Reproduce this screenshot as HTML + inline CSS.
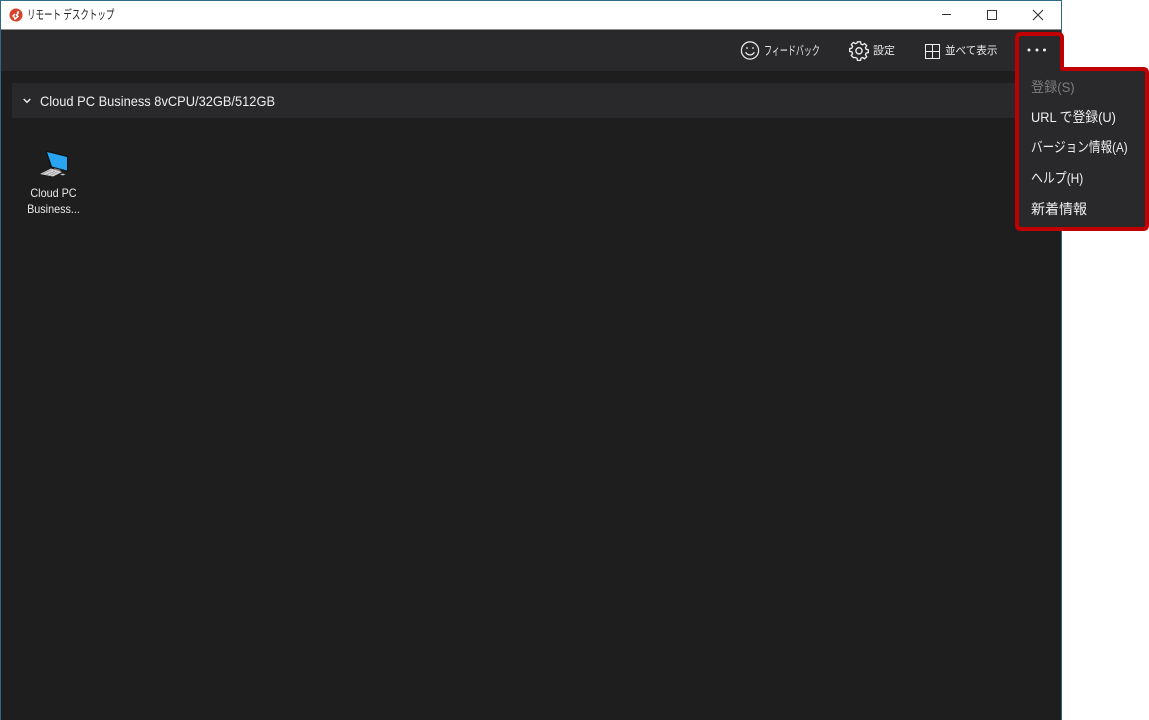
<!DOCTYPE html>
<html lang="ja"><head><meta charset="utf-8"><title>リモート デスクトップ</title>
<style>
html,body{margin:0;padding:0;background:#fff;}
body{width:1149px;height:720px;overflow:hidden;position:relative;font-family:"Liberation Sans","Noto Sans CJK JP",sans-serif;}
.a{position:absolute;white-space:nowrap;}
.m{position:absolute;left:1031px;font-size:14px;line-height:20px;color:#f0f0f0;white-space:nowrap;transform-origin:0 50%;}
.t{position:absolute;font-size:11px;line-height:16px;color:#e8e8e8;white-space:nowrap;top:43px;transform-origin:0 50%;}
</style></head><body>
<div class="a" style="left:0;top:0;width:1062px;height:720px;background:#1e1e1e;"></div>
<div class="a" style="left:0;top:0;width:1062px;height:29px;background:#fff;"></div>
<div class="a" style="left:0;top:29px;width:1062px;height:1px;background:#8c8c8c;"></div>
<div class="a" style="left:0;top:30px;width:1062px;height:41px;background:#29282b;"></div>
<div class="a" style="left:12px;top:83px;width:1050px;height:35px;background:#29282b;"></div>
<div class="a" style="left:0;top:0;width:1062px;height:1px;background:#2f6f8c;"></div>
<div class="a" style="left:0;top:0;width:1px;height:720px;background:#2a6a86;"></div>
<div class="a" style="left:1061px;top:0;width:1px;height:720px;background:#2a6a86;"></div>

<svg class="a" style="left:9px;top:8px" width="14" height="14" viewBox="0 0 14 14"><circle cx="7" cy="7" r="6.5" fill="#d8412a"/><path d="M3.5 8.500L6 6M8 4.500l2 -1M9.500 4.500L7.500 7l1.500 1.500L6 11 5 8.500" fill="none" stroke="#fff" stroke-width="1.5"/></svg>
<div class="a" style="left:27px;top:8px;font-size:12.5px;line-height:15px;color:#222;transform:scaleX(.68);transform-origin:0 50%;">リモート デスクトップ</div>

<svg class="a" style="left:930px;top:0" width="125" height="29" viewBox="0 0 125 29" fill="none" stroke="#333" stroke-width="1">
<path d="M12 14.500h9"/><rect x="57.500" y="10.500" width="9" height="9"/><path d="M103 10l10 10M113 10l-10 10" stroke-width="1.1"/></svg>

<svg class="a" style="left:740px;top:40px" width="21" height="21" viewBox="0 0 21 21" fill="none" stroke="#eee" stroke-width="1.2"><circle cx="10" cy="10.500" r="8.600"/><circle cx="7" cy="8" r=".9" fill="#eee" stroke="none"/><circle cx="13" cy="8" r=".9" fill="#eee" stroke="none"/><path d="M5.700 12.200c1.800 3.600 6.800 3.600 8.600 0"/></svg>
<div class="t" style="left:764px;font-size:12.5px;transform:scaleX(.64);">フィードバック</div>

<svg class="a" style="left:849px;top:41px" width="20" height="20" viewBox="0 0 20 20" fill="none" stroke="#eee" stroke-width="1.4"><path d="M8.300 1.200h3.200l.5 2.400 1.700.7 2.100-1.300 2.200 2.200-1.300 2.100.7 1.700 2.300.5v3.000l-2.300.5-.7 1.700 1.300 2.100-2.200 2.200-2.100-1.300-1.700.7-.5 2.300H8.300l-.5-2.300-1.700-.7L4 17.800 1.800 15.600l1.300-2.100-.7-1.700L.1 11.300V8.300l2.300-.5.7-1.700L1.800 4 4 1.800l2.100 1.300 1.700-.7z" transform="translate(.6 -.3) scale(.95)"/><circle cx="10" cy="9.800" r="3.100"/></svg>
<div class="t" style="left:873px;">設定</div>

<svg class="a" style="left:925px;top:43px" width="15" height="16" viewBox="0 0 15 16" fill="none" stroke="#eee" stroke-width="1"><rect x=".5" y="1.500" width="14" height="14"/><path d="M7.500 1.500v14M.5 8.500h14"/></svg>
<div class="t" style="left:945px;transform:scaleX(.96);">並べて表示</div>

<svg class="a" style="left:23px;top:98px" width="8" height="6" viewBox="0 0 8 6" fill="none" stroke="#eee" stroke-width="1.4"><path d="M.7 1l3.300 3.300L7.300 1"/></svg>
<div class="a" style="left:40px;top:91.500px;font-size:14px;line-height:18px;color:#eee;transform:scaleX(.918);transform-origin:0 50%;">Cloud PC Business 8vCPU/32GB/512GB</div>

<svg class="a" style="left:38px;top:150px" width="32" height="30" viewBox="0 0 32 30">
<path d="M8 0.500L30 6V22L12 17.500z" fill="#101012"/>
<path d="M9 2L29 7V20.500L14 16.500z" fill="#29a4f0"/>
<path d="M16 18l6 1.500 1 2.500-6-.5z" fill="#777"/>
<path d="M2 24L13 18.500l11 3.500-9 4.500z" fill="#d4d4d4"/>
<path d="M5 23.500l9-4M8 25l9-4M11 26l8-4" stroke="#8a8a8a" stroke-width=".6" fill="none"/>
<path d="M22 24.500l3-1 2.500 1-3 1z" fill="#bbb"/>
</svg>
<div class="a" style="left:13px;top:184.500px;width:81px;text-align:center;font-size:12px;line-height:16px;color:#e8e8e8;transform:scaleX(.9);">Cloud PC<br>Business...</div>

<svg class="a" style="left:1010px;top:28px" width="139" height="208" viewBox="0 0 139 208">
<path d="M11 6H48Q52 6 52 10V41H133Q137 41 137 45V197Q137 201 133 201H11Q7 201 7 197V10Q7 6 11 6Z" fill="#29282b" stroke="#c00000" stroke-width="4" stroke-linejoin="round"/>
<circle cx="19" cy="22" r="1.500" fill="#f0f0f0"/><circle cx="27" cy="22" r="1.500" fill="#f0f0f0"/><circle cx="34.500" cy="22" r="1.500" fill="#f0f0f0"/>
</svg>

<div class="m" style="top:77px;color:#7d7d7d;transform:scaleX(.936);">登録(S)</div>
<div class="m" style="top:107px;transform:scaleX(.914);">URL で登録(U)</div>
<div class="m" style="top:137px;transform:scaleX(.83);">バージョン情報(A)</div>
<div class="m" style="top:168px;transform:scaleX(.85);">ヘルプ(H)</div>
<div class="m" style="top:198.500px;">新着情報</div>
</body></html>
